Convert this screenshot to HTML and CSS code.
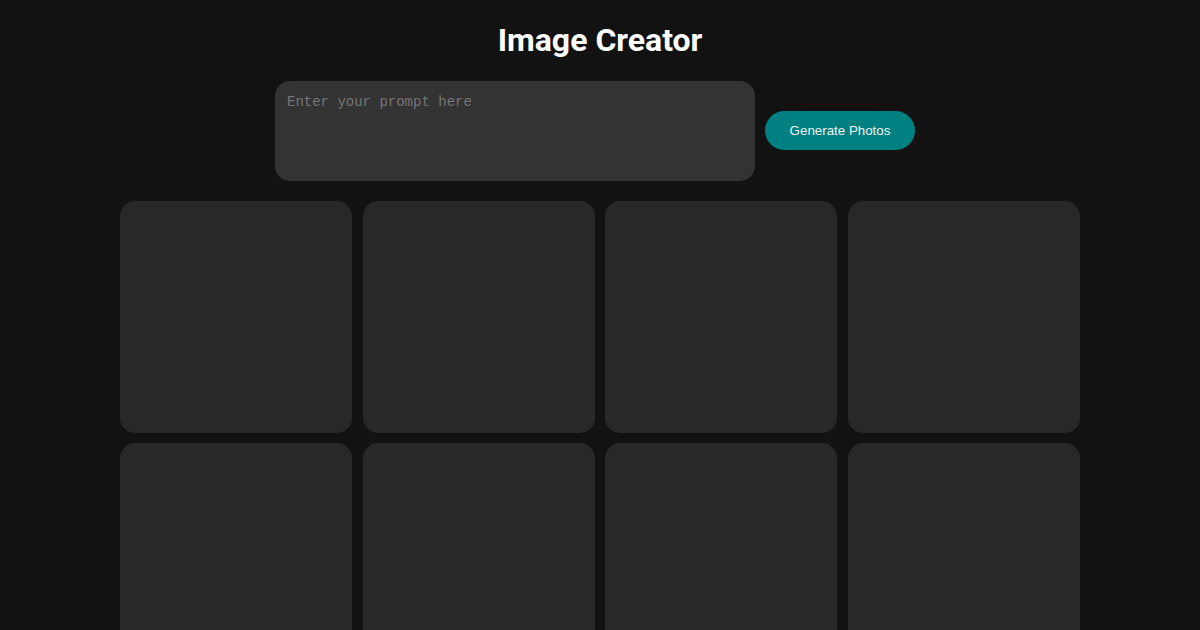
FILE: index.html
```html
<!DOCTYPE html>
<html lang="en">
<head>
<meta charset="utf-8">
<title>Image Creator</title>
<link rel="stylesheet" href="styles.css">
</head>
<body>
<main class="app">
  <h1 class="title">Image Creator</h1>
  <form class="prompt-form">
    <textarea class="prompt-input" placeholder="Enter your prompt here"></textarea>
    <button type="button" class="generate-btn">Generate Photos</button>
  </form>
  <section class="gallery">
    <div class="card"></div>
    <div class="card"></div>
    <div class="card"></div>
    <div class="card"></div>
    <div class="card"></div>
    <div class="card"></div>
    <div class="card"></div>
    <div class="card"></div>
  </section>
</main>
</body>
</html>
```

FILE: styles.css
```css
html, body {
  margin: 0;
  padding: 0;
  background: #121212;
  color: #fff;
  font-family: Roboto, "Liberation Sans", sans-serif;
}

.app {
  padding-top: 21px;
  display: flex;
  flex-direction: column;
  align-items: center;
}

.title {
  margin: 0 0 22px;
  font-size: 32px;
  font-weight: 700;
  line-height: 38px;
  color: #fff;
}

.prompt-form {
  display: flex;
  align-items: center;
  justify-content: center;
  gap: 10px;
  margin-bottom: 20px;
}

.prompt-input {
  box-sizing: border-box;
  width: 480px;
  height: 100px;
  padding: 13px 12px 11px;
  border: none;
  border-radius: 15px;
  background: #333333;
  color: #fff;
  font-family: "Liberation Mono", monospace;
  font-size: 14px;
  resize: none;
  outline: none;
}

.prompt-input::placeholder {
  color: #757575;
}

.generate-btn {
  box-sizing: border-box;
  width: 150px;
  height: 39px;
  margin: 0 10px 1px 0;
  padding: 0 20px;
  border: none;
  border-radius: 20px;
  background: #008080;
  color: #f0f0f0;
  font-family: "Liberation Sans", Arial, sans-serif;
  font-size: 13.33px;
  cursor: pointer;
}

.gallery {
  width: 960px;
  display: grid;
  grid-template-columns: repeat(4, 1fr);
  gap: 10px;
}

.card {
  aspect-ratio: 1 / 1;
  height: 232px;
  border-radius: 15px;
  background: #282828;
}
```
